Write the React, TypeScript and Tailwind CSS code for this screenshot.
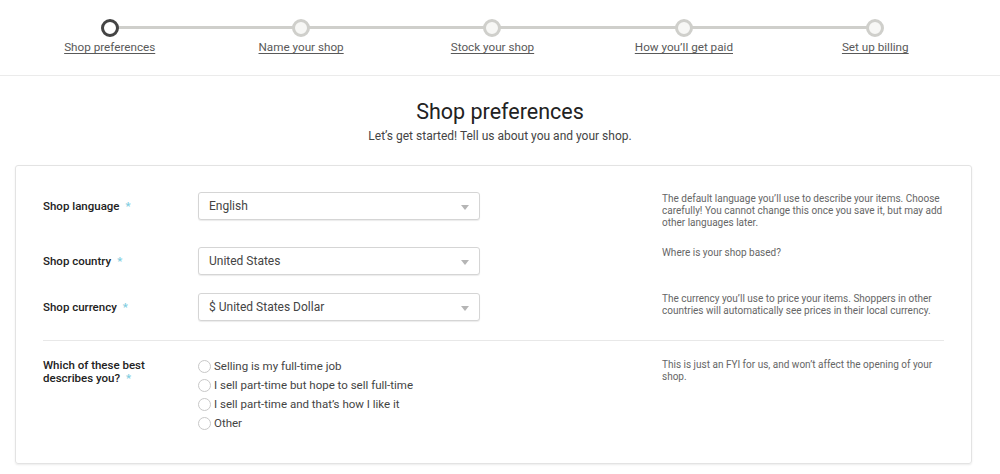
import React from "react";

const steps = ["Shop preferences", "Name your shop", "Stock your shop", "How you\u2019ll get paid", "Set up billing"];

function Select({ value }: { value: string }) {
  return (
    <div className="relative flex h-[28px] w-[282px] shrink-0 items-center rounded-[3px] border border-[#d5d5d5] bg-white pl-[10px] text-[12px] text-[#444] shadow-[0_1px_1px_rgba(0,0,0,0.08)]">
      {value}
      <span className="absolute right-[10px] top-[12px] h-0 w-0 border-x-[4px] border-t-[5px] border-x-transparent border-t-[#b5b5b5]" />
    </div>
  );
}

function Label({ text }: { text: React.ReactNode }) {
  return (
    <div className="w-[155px] shrink-0 text-[11.5px] font-medium leading-[13px] text-[#222]">
      {text}
      <span className="ml-[6px] text-[#7fcde0]">*</span>
    </div>
  );
}

const help = "ml-[182px] w-[286px] shrink-0 text-[10px] leading-[12px] text-[#666]";

export default function App() {
  return (
    <div className="w-[1000px] bg-white text-[#222]" style={{ fontFamily: "Roboto, 'Liberation Sans', sans-serif" }}>
      <div className="border-b border-[#ebebeb]">
        <div className="relative mx-[14px] w-[957px] pt-[19px] pb-[21px]">
          <div className="absolute left-[96px] right-[96px] top-[26px] h-[3px] bg-[#cfcfcb]" />
          <div className="relative grid grid-cols-5">
            {steps.map((s, i) => (
              <div key={s} className="flex flex-col items-center">
                <div
                  className={
                    i === 0
                      ? "h-[18px] w-[18px] rounded-full border-[3px] border-[#444] bg-white"
                      : "h-[18px] w-[18px] rounded-full border-[3px] border-[#cfcfcb] bg-[#f7f7f5]"
                  }
                />
                <div className="mt-[3px] text-[11.7px] leading-[14px] text-[#595959] underline underline-offset-[2px]">{s}</div>
              </div>
            ))}
          </div>
        </div>
      </div>

      <div className="flex flex-col items-center pt-[23px]">
        <h1 className="text-[21.5px] leading-[26px] font-normal text-[#222]">Shop preferences</h1>
        <p className="mt-[4px] text-[12px] leading-[14px] text-[#444]">Let&rsquo;s get started! Tell us about you and your shop.</p>
      </div>

      <div className="mx-[15px] mt-[22px] mb-[10px] h-[299px] w-[957px] overflow-hidden rounded-[3px] border border-[#e3e3e3] px-[27px] pt-[26px] shadow-[0_1px_2px_rgba(0,0,0,0.08)]">
        <div className="flex items-start">
          <div className="flex h-[28px] shrink-0 items-center"><Label text="Shop language" /></div>
          <Select value="English" />
          <p className={help + " mt-[1px]"}>
            The default language you&rsquo;ll use to describe your items. Choose carefully! You cannot change this once you save it, but may add other languages later.
          </p>
        </div>
        <div className="mt-[18px] flex items-start">
          <div className="flex h-[28px] shrink-0 items-center"><Label text="Shop country" /></div>
          <Select value="United States" />
          <p className={help}>Where is your shop based?</p>
        </div>
        <div className="mt-[18px] flex items-start">
          <div className="flex h-[28px] shrink-0 items-center"><Label text="Shop currency" /></div>
          <Select value="$ United States Dollar" />
          <p className={help}>
            The currency you&rsquo;ll use to price your items. Shoppers in other countries will automatically see prices in their local currency.
          </p>
        </div>
        <div className="mt-[19px] border-t border-[#e8e8e8]" />
        <div className="mt-[19px] flex items-start">
          <div className="-mt-[1px] w-[155px] shrink-0">
            <Label text={<>Which of these best<br />describes you?</>} />
          </div>
          <div className="flex w-[282px] shrink-0 flex-col gap-[6px]">
            {["Selling is my full-time job", "I sell part-time but hope to sell full-time", "I sell part-time and that\u2019s how I like it", "Other"].map((o) => (
              <label key={o} className="flex h-[13px] items-center gap-[3px] text-[11.5px] text-[#444]">
                <span className="h-[13px] w-[13px] shrink-0 rounded-full border border-[#c8c8c8] bg-white" />
                {o}
              </label>
            ))}
          </div>
          <p className={help + " -mt-[1px]"}>
            This is just an FYI for us, and won&rsquo;t affect the opening of your shop.
          </p>
        </div>
      </div>
    </div>
  );
}
